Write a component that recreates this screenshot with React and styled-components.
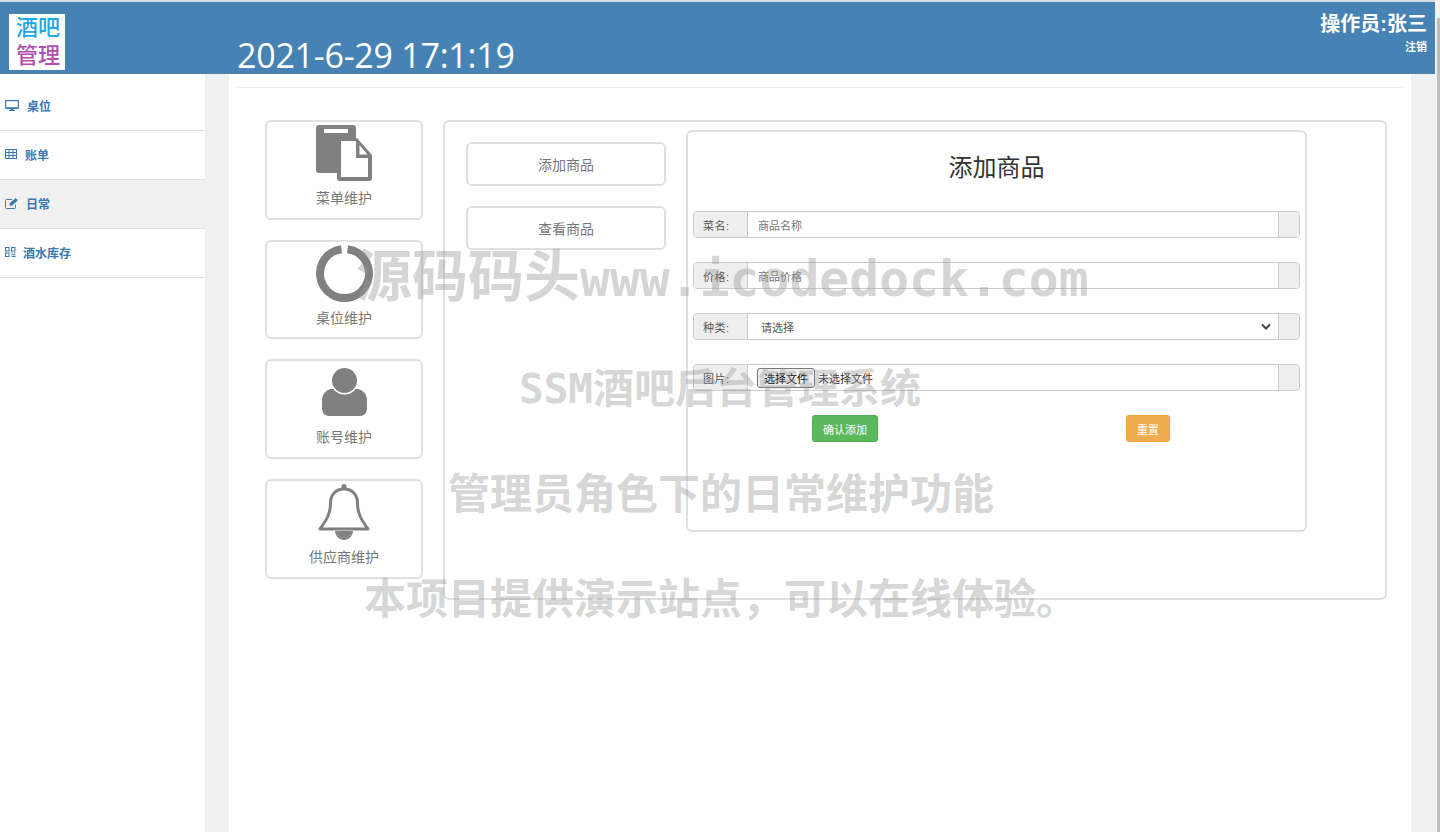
import React from "react";
import styled, { createGlobalStyle } from "styled-components";

const Global = createGlobalStyle`
    html, body {
        margin: 0;
        padding: 0;
        height: 100%;
        overflow: hidden;
    }
    body {
        font-family: "Liberation Sans", "Noto Sans CJK SC", sans-serif;
        font-size: 12px;
        color: #333;
        background: #f1f1f1;
    }
    * {
        box-sizing: border-box;
    }
`
const Page = styled.div`
    position: relative;
    width: 1440px;
    height: 832px;
    overflow: hidden;
    display: flex;
    flex-direction: column;
    padding-top: 2px;
    padding-right: 5px;
    background: #f1f1f1;
`
const TopLine = styled.div`
    position: absolute;
    left: 0;
    right: 5px;
    top: 0;
    height: 2px;
    background: #dcdcdc;
`
const Scrollbar = styled.div`
    position: absolute;
    right: 0;
    top: 18px;
    width: 3px;
    bottom: 0;
    background: #bdbdbd;
`
const Header = styled.header`
    height: 72px;
    flex-shrink: 0;
    background: #4682b4;
    display: flex;
    color: #fff;
    padding: 12px 8px 0 9px;
`
const Logo = styled.div`
    width: 56px;
    height: 56px;
    padding-left: 2px;
    background: #fff;
    display: flex;
    flex-direction: column;
    align-items: center;
    justify-content: center;
    font-size: 22px;
    font-weight: 500;
    line-height: 28px;
`
const LogoLine = styled.span`
    color: ${(p) => p.$color};
`
const Clock = styled.div`
    margin-left: 172px;
    padding-top: 23px;
    font-family: "Open Sans", "Liberation Sans", sans-serif;
    font-size: 34px;
    letter-spacing: -0.25px;
    line-height: 36px;
`
const Operator = styled.div`
    margin-left: auto;
    text-align: right;
    margin-top: -3px;
    font-weight: bold;
`
const OperatorName = styled.div`
    font-size: 20px;
    line-height: 26px;
`
const Logout = styled.div`
    font-size: 11px;
    line-height: 16px;
    margin-top: 2px;
`
const Body = styled.div`
    flex: 1;
    display: flex;
`
const Sidebar = styled.nav`
    width: 205px;
    padding-top: 8px;
    background: #fff;
    flex-shrink: 0;
`
const SideItem = styled.div`
    height: 49px;
    display: flex;
    align-items: center;
    gap: ${(p) => p.$gap}px;
    padding-left: 5px;
    padding-bottom: 2px;
    border-bottom: 1px solid #dedede;
    color: #3a78b0;
    font-size: 12px;
    font-weight: bold;
    background: ${(p) => (p.$active ? "#f1f1f1" : "#fff")};
    svg {
        flex-shrink: 0;
    }
`
const Main = styled.main`
    width: 1182px;
    margin-left: 24px;
    background: #fff;
    padding: 13px 8px 0 8px;
`
const Rule = styled.div`
    height: 1px;
    background: #eeeeee;
    margin-bottom: 32px;
`
const Content = styled.div`
    display: flex;
    align-items: flex-start;
    padding-left: 28px;
`
const Tiles = styled.div`
    width: 158px;
    display: flex;
    flex-direction: column;
    gap: 20px;
    flex-shrink: 0;
`
const Tile = styled.div`
    height: 100px;
    border: 2px solid #e0e0e0;
    border-radius: 6px;
    display: flex;
    flex-direction: column;
    align-items: center;
    color: #777;
    font-size: 14px;
    line-height: 20px;
    &:nth-child(2) {
        height: 99px;
    }
`
const IconSlot = styled.div`
    height: 62px;
    margin-bottom: 4px;
    display: flex;
    align-items: center;
    justify-content: center;
    svg {
        display: block;
    }
`
const Panel = styled.div`
    width: 944px;
    height: 480px;
    margin-left: 20px;
    border: 2px solid #e0e0e0;
    border-radius: 6px;
    display: flex;
    align-items: flex-start;
    padding: 8px 0 0 21px;
`
const Actions = styled.div`
    width: 200px;
    padding-top: 12px;
    display: flex;
    flex-direction: column;
    gap: 20px;
`
const ActionButton = styled.div`
    height: 44px;
    padding-bottom: 1px;
    border: 2px solid #e0e0e0;
    border-radius: 6px;
    display: flex;
    align-items: center;
    justify-content: center;
    color: #777;
    font-size: 14px;
`
const FormCard = styled.div`
    width: 621px;
    height: 402px;
    margin-left: 20px;
    border: 2px solid #e0e0e0;
    border-radius: 6px;
    padding: 0 5px;
`
const FormTitle = styled.h2`
    margin: 0;
    padding-top: 22px;
    height: 79px;
    text-align: center;
    font-size: 24px;
    line-height: 28px;
    font-weight: normal;
    color: #333;
`
const Rows = styled.div`
    display: flex;
    flex-direction: column;
    gap: 24px;
`
const InputGroup = styled.div`
    height: 27px;
    display: flex;
    border: 1px solid #ccc;
    border-radius: 4px;
    overflow: hidden;
    font-size: 11px;
`
const Addon = styled.div`
    width: 54px;
    background: #eee;
    color: #555;
    display: flex;
    align-items: center;
    padding-left: 9px;
    letter-spacing: 0.5px;
    border-right: 1px solid #ccc;
    flex-shrink: 0;
`
const Field = styled.div`
    flex: 1;
    display: flex;
    align-items: center;
    padding-left: ${(p) => p.$pad}px;
    padding-right: 7px;
    color: ${(p) => p.$color || "#777"};
    background: #fff;
`
const EndAddon = styled.div`
    width: 21px;
    background: #eee;
    border-left: 1px solid #ccc;
    flex-shrink: 0;
`
const SelectText = styled.span`
    flex: 1;
`
const FileButton = styled.span`
    height: 20px;
    width: 58px;
    display: flex;
    align-items: center;
    justify-content: center;
    border: 1px solid #767676;
    border-radius: 3px;
    background: #efefef;
    color: #000;
    margin-right: 3px;
`
const FormActions = styled.div`
    display: flex;
    padding-top: 24px;
`
const SubmitButton = styled.div`
    height: 27px;
    width: ${(p) => p.$width}px;
    margin-left: ${(p) => p.$left}px;
    background: ${(p) => p.$bg};
    border: 1px solid ${(p) => p.$border};
    border-radius: 3px;
    color: #fff;
    font-size: 11px;
    display: flex;
    align-items: center;
    justify-content: center;
`
const Watermark = styled.div`
    position: absolute;
    left: ${(p) => p.$x}px;
    top: ${(p) => p.$y}px;
    white-space: nowrap;
    color: rgba(150, 150, 150, 0.4);
    font-family: "DejaVu Sans Mono", "Noto Sans CJK SC", monospace;
    font-weight: bold;
    font-size: ${(p) => p.$size}px;
    line-height: 1;
    pointer-events: none;
`
const WatermarkCjk = styled.span`
    font-size: 56px;
`
const WatermarkLatin = styled.span`
    font-size: 49.7px;
`

const MonitorIcon = () => (
    <svg width="14" height="11" viewBox="0 0 14 11" fill="#3a78b0">
        <path fillRule="evenodd" d="M1 0h12a1 1 0 0 1 1 1v7a1 1 0 0 1-1 1H1a1 1 0 0 1-1-1V1a1 1 0 0 1 1-1ZM1.200 1.200v6h11.600v-6Z" />
        <rect x="5.500" y="9" width="3" height="1" />
        <rect x="4" y="10" width="6" height="1" />
    </svg>
);

const TableIcon = () => (
    <svg width="12" height="10" viewBox="0 0 12 10" fill="none" stroke="#3a78b0" strokeWidth="1">
        <rect x="0.5" y="0.5" width="11" height="9" />
        <path d="M0.5 3.5H11.500M0.500 6.500H11.500M4 0.500V9.500M8 0.500V9.500" />
    </svg>
);

const EditIcon = () => (
    <svg width="13" height="11" viewBox="0 0 13 11" fill="none" stroke="#3a78b0" strokeWidth="1">
        <path d="M10.500 6.500V9.500a1 1 0 0 1-1 1H1.500a1 1 0 0 1-1-1V2.500a1 1 0 0 1 1-1H7" />
        <path d="M5 7.200 5.400 5 10.800 0.600 12.400 2.200 7 7.200Z" fill="#3a78b0" />
    </svg>
);

const QrIcon = () => (
    <svg width="11" height="10" viewBox="0 0 11 10" fill="none" stroke="#3a78b0" strokeWidth="1">
        <rect x="0.500" y="0.500" width="3.500" height="3.500" />
        <rect x="6.500" y="0.500" width="3.500" height="3.500" />
        <rect x="0.500" y="6" width="3.500" height="3.500" />
        <path d="M6.500 6h1.500M9 6h1.500M6.500 9.500h4M6.500 7.800h4" />
    </svg>
);

const FilesIcon = () => (
    <svg width="56" height="56" viewBox="0 0 56 56" fill="#808080">
        <rect x="0" y="0" width="40" height="48" rx="3" />
        <path d="M24 13h17l15 17v23a3 3 0 0 1-3 3H24a3 3 0 0 1-3-3V16a3 3 0 0 1 3-3Z" />
        <rect x="8" y="4" width="24" height="4" fill="#fff" />
        <path d="M25 16H40V33H52V52H25Z" fill="#fff" />
        <path d="M43.500 20V29.500H51.500Z" fill="#fff" />
    </svg>
);

const RingIcon = () => (
    <svg width="57" height="57" viewBox="0 0 57 57" fill="none" stroke="#808080" strokeWidth="8">
        <path d="M25.500 4.200A24.500 24.500 0 1 0 31.500 4.200" />
    </svg>
);

const UserIcon = () => (
    <svg width="45" height="48" viewBox="0 0 45 48" fill="#808080">
        <path d="M9 21c-5 1-9 5-9 12v7c0 5 3 8 7 8h31c4 0 7-3 7-8v-7c0-7-4-11-9-12Z" />
        <circle cx="22.500" cy="12.500" r="14" fill="#fff" />
        <circle cx="22.500" cy="12.500" r="12.500" />
    </svg>
);

const BellIcon = () => (
    <svg width="52" height="56" viewBox="0 0 52 56" fill="none" stroke="#808080" strokeWidth="3" strokeLinejoin="round">
        <circle cx="26" cy="2.500" r="2.500" fill="#808080" stroke="none" />
        <path d="M26 5c-8.500 0-13.500 6-13.500 14 0 11-4 17-10.500 26h48c-6.500-9-10.500-15-10.500-26 0-8-5-14-13.500-14Z" />
        <path d="M19 47a7 7 0 0 0 14 0Z" fill="#808080" stroke="none" />
        <path d="M18 47a8 8 0 0 0 16 0" strokeWidth="2" />
    </svg>
);

const menu = [
    { label: "桌位", gap: 8, icon: <MonitorIcon /> },
    { label: "账单", gap: 8, icon: <TableIcon /> },
    { label: "日常", gap: 8, icon: <EditIcon />, active: true },
    { label: "酒水库存", gap: 7, icon: <QrIcon /> },
];

const tiles = [
    { label: "菜单维护", icon: <FilesIcon /> },
    { label: "桌位维护", icon: <RingIcon /> },
    { label: "账号维护", icon: <UserIcon /> },
    { label: "供应商维护", icon: <BellIcon /> },
];

const App = () => {
    return (
        <Page>
            <Global />
            <TopLine />
            <Header>
                <Logo>
                    <LogoLine $color="#22a7e8">酒吧</LogoLine>
                    <LogoLine $color="#b04fb0">管理</LogoLine>
                </Logo>
                <Clock>2021-6-29 17:1:19</Clock>
                <Operator>
                    <OperatorName>操作员:张三</OperatorName>
                    <Logout>注销</Logout>
                </Operator>
            </Header>
            <Body>
                <Sidebar>
                    {menu.map((item) => (
                        <SideItem key={item.label} $gap={item.gap} $active={item.active}>
                            {item.icon}
                            {item.label}
                        </SideItem>
                    ))}
                </Sidebar>
                <Main>
                    <Rule />
                    <Content>
                        <Tiles>
                            {tiles.map((tile) => (
                                <Tile key={tile.label}>
                                    <IconSlot>{tile.icon}</IconSlot>
                                    {tile.label}
                                </Tile>
                            ))}
                        </Tiles>
                        <Panel>
                            <Actions>
                                <ActionButton>添加商品</ActionButton>
                                <ActionButton>查看商品</ActionButton>
                            </Actions>
                            <FormCard>
                                <FormTitle>添加商品</FormTitle>
                                <Rows>
                                    <InputGroup>
                                        <Addon>菜名:</Addon>
                                        <Field $pad={10}>商品名称</Field>
                                        <EndAddon />
                                    </InputGroup>
                                    <InputGroup>
                                        <Addon>价格:</Addon>
                                        <Field $pad={10}>商品价格</Field>
                                        <EndAddon />
                                    </InputGroup>
                                    <InputGroup>
                                        <Addon>种类:</Addon>
                                        <Field $pad={13} $color="#555">
                                            <SelectText>请选择</SelectText>
                                            <svg width="10" height="7" viewBox="0 0 10 7" fill="none" stroke="#444" strokeWidth="2">
                                                <path d="M1 1.500 5 5.500 9 1.500" />
                                            </svg>
                                        </Field>
                                        <EndAddon />
                                    </InputGroup>
                                    <InputGroup>
                                        <Addon>图片:</Addon>
                                        <Field $pad={9} $color="#333">
                                            <FileButton>选择文件</FileButton>
                                            未选择文件
                                        </Field>
                                        <EndAddon />
                                    </InputGroup>
                                </Rows>
                                <FormActions>
                                    <SubmitButton $width={66} $left={119} $bg="#5cb85c" $border="#4cae4c">确认添加</SubmitButton>
                                    <SubmitButton $width={44} $left={248} $bg="#f0ad4e" $border="#eea236">重置</SubmitButton>
                                </FormActions>
                            </FormCard>
                        </Panel>
                    </Content>
                </Main>
            </Body>
            <Scrollbar />
            <Watermark $x={356} $y={249} $size={49.7}>
                <WatermarkCjk>源码码头</WatermarkCjk>
                <WatermarkLatin>www.icodedock.com</WatermarkLatin>
            </Watermark>
            <Watermark $x={519} $y={369} $size={41}>SSM酒吧后台管理系统</Watermark>
            <Watermark $x={448} $y={474} $size={42}>管理员角色下的日常维护功能</Watermark>
            <Watermark $x={364} $y={579} $size={42}>本项目提供演示站点，可以在线体验。</Watermark>
        </Page>
    );
}

export default App;
